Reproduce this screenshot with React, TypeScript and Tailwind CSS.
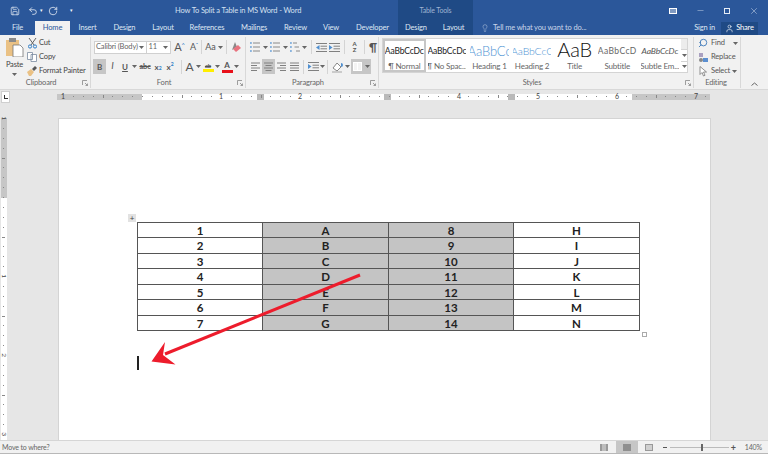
import type { ReactNode } from "react";
import { Save, Undo2, RotateCw, Lightbulb, User, Minus, X, Search } from "lucide-react";

const tabs = [
  { label: "File", w: "w-[35px]" },
  { label: "Home", w: "w-[35px]", active: true },
  { label: "Insert", w: "w-[35px]" },
  { label: "Design", w: "w-[39px]" },
  { label: "Layout", w: "w-[38px]" },
  { label: "References", w: "w-[50px]" },
  { label: "Mailings", w: "w-[44px]" },
  { label: "Review", w: "w-[39px]" },
  { label: "View", w: "w-[32px]" },
  { label: "Developer", w: "w-[51px]" },
];

const rows = [
  ["1", "A", "8", "H"],
  ["2", "B", "9", "I"],
  ["3", "C", "10", "J"],
  ["4", "D", "11", "K"],
  ["5", "E", "12", "L"],
  ["6", "F", "13", "M"],
  ["7", "G", "14", "N"],
];

const styles = [
  { sample: "AaBbCcDc", name: "¶ Normal", cls: "text-[8.5px] leading-[20px] text-[#222]", on: true },
  { sample: "AaBbCcDc", name: "¶ No Spac...", cls: "text-[8.5px] leading-[20px] text-[#222]" },
  { sample: "AaBbCc", name: "Heading 1", cls: "text-[13px] leading-[20px] font-light text-[#4f94d4]" },
  { sample: "AaBbCcC", name: "Heading 2", cls: "text-[10.5px] leading-[20px] font-light text-[#4f94d4]" },
  { sample: "AaB", name: "Title", cls: "text-[20px] leading-[17px] font-light text-[#111]" },
  { sample: "AaBbCcD", name: "Subtitle", cls: "text-[8.5px] leading-[20px] text-[#666] tracking-[0.4px]" },
  { sample: "AaBbCcDc", name: "Subtle Em...", cls: "text-[8.5px] leading-[20px] italic text-[#555]" },
];

const Caret = () => (
  <svg width="5" height="3" viewBox="0 0 5 3" className="shrink-0">
    <path d="M0 0h5L2.500 3z" fill="#666" />
  </svg>
);

const Launcher = () => (
  <svg width="6" height="6" viewBox="0 0 6 6" className="shrink-0">
    <path d="M.5 5V.5H5M3 3l2.500 2.500M5.500 3.500v2h-2" fill="none" stroke="#888" strokeWidth=".8" />
  </svg>
);

const Lines = ({ kind }: { kind: string }) => {
  const d: Record<string, string> = {
    left: "M2 3h9M2 5.500h6M2 8h9M2 10.500h6",
    center: "M2 3h9M3.500 5.500h6M2 8h9M3.500 10.500h6",
    right: "M2 3h9M5 5.500h6M2 8h9M5 10.500h6",
    justify: "M2 3h9M2 5.500h9M2 8h9M2 10.500h9",
  };
  return (
    <svg width="13" height="13" viewBox="0 0 13 13">
      <path d={d[kind]} stroke="#808080" strokeWidth="1" fill="none" />
    </svg>
  );
};

const ListIcon = ({ nested = false }: { nested?: boolean }) => (
  <svg width="10" height="10" viewBox="0 0 10 10">
    <path d="M0 1h1.800M0 5h1.800M0 9h1.800" stroke="#6aa0d8" strokeWidth="1.500" />
    <path d={nested ? "M3 1h4M4.500 5H9M6 9h4" : "M3 1h7M3 5h7M3 9h7"} stroke="#8a8a8a" strokeWidth="1" />
  </svg>
);

const IndentIcon = ({ flip = false }: { flip?: boolean }) => (
  <svg width="11" height="9" viewBox="0 0 11 9">
    <path d="M0 .5h11M4.500 3.200H11M4.500 5.800H11M0 8.500h11" stroke="#808080" strokeWidth="1" />
    <path d={flip ? "M3.500 4.500 0 2v5z" : "M0 4.500 3.500 2v5z"} fill="#4f8fd0" />
  </svg>
);

const Sep = () => <span className="block w-px h-[14px] bg-[#d4d4d4] shrink-0" />;

const Slot = ({ className = "", children }: { className?: string; children: ReactNode }) => (
  <span className={`flex items-center justify-center shrink-0 h-[15px] text-[#555] ${className}`}>{children}</span>
);

const Group = ({ width, label, launcher = true, children }: { width: string; label?: string; launcher?: boolean; children: ReactNode }) => (
  <div className={`${width} shrink-0 flex flex-col border-r border-[#d8d8d8] mt-[2px] mb-[1px]`}>
    <div className="flex-1 min-h-0">{children}</div>
    <div className="h-[10px] flex items-center justify-between pr-[2px] pb-[1px] text-[7.5px] text-[#666] leading-none">
      <span className="flex-1 text-center">{label}</span>
      {launcher && <Launcher />}
    </div>
  </div>
);

const ClipRow = ({ icon, label }: { icon: ReactNode; label: string }) => (
  <div className="flex items-center gap-[2px] h-[14px] text-[7.5px] text-[#444] whitespace-nowrap">
    <span className="w-[10px] flex justify-center">{icon}</span>
    {label}
  </div>
);

const Clipboard = () => (
  <div className="flex pl-[3px]">
    <div className="w-[23px] flex flex-col items-center text-[7.5px] text-[#444]">
      <svg width="18" height="20" viewBox="0 0 18 20">
        <rect x="0" y="3" width="13" height="16" fill="#eac184" />
        <rect x="3" y="1" width="7" height="4" fill="#8a8a8a" />
        <path d="M7 8h7l3 3v9H7z" fill="#fff" stroke="#777" strokeWidth=".8" />
      </svg>
      <span className="mt-[3px] leading-[10px]">Paste</span>
      <span className="mt-[3px]">
        <Caret />
      </span>
    </div>
    <div className="ml-[1px] -mt-[1px]">
      <ClipRow
        label="Cut"
        icon={
          <svg width="9" height="11" viewBox="0 0 9 11">
            <path d="M1 0l5 7M8 0L3 7" stroke="#666" strokeWidth="1" />
            <circle cx="2" cy="8.500" r="1.600" fill="none" stroke="#2f7dc6" />
            <circle cx="7" cy="8.500" r="1.600" fill="none" stroke="#2f7dc6" />
          </svg>
        }
      />
      <ClipRow
        label="Copy"
        icon={
          <svg width="10" height="10" viewBox="0 0 10 10">
            <path d="M.5.5h5v7h-5zM4 2.500h5.500v7H4z" fill="#fff" stroke="#7a8aa0" strokeWidth=".8" />
          </svg>
        }
      />
      <ClipRow
        label="Format Painter"
        icon={
          <svg width="10" height="10" viewBox="0 0 10 10">
            <path d="M0 6l4-3 3 3-3 4H2z" fill="#eac184" />
            <path d="M5 3l3-3 2 2-3 3z" fill="#555" />
          </svg>
        }
      />
    </div>
  </div>
);

const FontGroup = () => (
  <div className="pl-[3px] pt-[3px] flex flex-col gap-[5px]">
    <div className="flex items-center h-[14px]">
      <div className="w-[54px] h-[13px] bg-white border border-[#d0d0d0] flex items-center justify-between px-[1px] pr-[2px] text-[7.5px] text-[#666] whitespace-nowrap">
        Calibri (Body)
        <Caret />
      </div>
      <div className="w-[25px] h-[13px] bg-white border border-l-0 border-[#d0d0d0] flex items-center justify-between px-[2px] text-[7.5px] text-[#666]">
        11
        <Caret />
      </div>
      <Slot className="w-[15px] ml-[1px] text-[11px]">
        A<span className="text-[#2f7dc6] text-[6px] -mt-[6px]">^</span>
      </Slot>
      <Slot className="w-[14px] text-[9px]">
        A<span className="text-[#2f7dc6] text-[6px] -mt-[5px]">ˇ</span>
      </Slot>
      <Sep />
      <Slot className="w-[24px] text-[9px] gap-[2px]">
        Aa
        <Caret />
      </Slot>
      <Sep />
      <Slot className="w-[18px]">
        <svg width="10" height="11" viewBox="0 0 10 11">
          <path d="M1 8l3-8 2 5z" fill="#888" />
          <path d="M2 7l5-4 3 3-5 4z" fill="#e8737f" />
        </svg>
      </Slot>
    </div>
    <div className="flex items-center h-[15px] text-[8px] font-bold -ml-[1px]">
      <Slot className="w-[13px] bg-[#c6c6c6]">B</Slot>
      <Slot className="w-[13px] italic font-normal text-[9.5px]">I</Slot>
      <Slot className="w-[12px] underline">U</Slot>
      <Slot className="w-[7px]">
        <Caret />
      </Slot>
      <Slot className="w-[14px] line-through text-[7.5px]">abc</Slot>
      <Slot className="w-[12px]">
        x<span className="text-[#2f7dc6] text-[5px] mt-[5px]">2</span>
      </Slot>
      <Slot className="w-[12px]">
        x<span className="text-[#2f7dc6] text-[5px] -mt-[4px]">2</span>
      </Slot>
      <span className="ml-[5px] mr-[2px]">
        <Sep />
      </span>
      <Slot className="w-[11px] text-[#6d9bd4] text-[12px] font-normal">A</Slot>
      <Slot className="w-[7px]">
        <Caret />
      </Slot>
      <Slot className="w-[12px] flex-col">
        <span className="text-[6px] leading-[7px] line-through">ab</span>
        <span className="w-[11px] h-[3px] bg-[#ffee00]" />
      </Slot>
      <Slot className="w-[7px]">
        <Caret />
      </Slot>
      <Slot className="w-[12px] flex-col">
        <span className="text-[8px] leading-[9px]">A</span>
        <span className="w-[11px] h-[3px] bg-[#e8101a]" />
      </Slot>
      <Slot className="w-[6px]">
        <Caret />
      </Slot>
    </div>
  </div>
);

const ParagraphGroup = () => (
  <div className="pl-[3px] pt-[3px] flex flex-col gap-[5px]">
    <div className="flex items-center h-[14px]">
      <Slot className="w-[12px]"><ListIcon /></Slot>
      <Slot className="w-[8px]"><Caret /></Slot>
      <Slot className="w-[12px]"><ListIcon /></Slot>
      <Slot className="w-[8px]"><Caret /></Slot>
      <Slot className="w-[12px]"><ListIcon nested /></Slot>
      <Slot className="w-[6px]"><Caret /></Slot>
      <span className="ml-[4px] mr-[3px]"><Sep /></span>
      <Slot className="w-[13px]"><IndentIcon /></Slot>
      <Slot className="w-[13px]"><IndentIcon flip /></Slot>
      <span className="mx-[3px]"><Sep /></span>
      <Slot className="w-[13px] text-[6px] font-bold flex-col leading-[6px] text-[#4f8fd0]">
        <span>A</span>
        <span>Z</span>
      </Slot>
      <span className="ml-[3px] mr-[3px]"><Sep /></span>
      <Slot className="w-[10px] text-[11px] font-bold">¶</Slot>
    </div>
    <div className="flex items-center h-[15px]">
      <Slot className="w-[13px]"><Lines kind="left" /></Slot>
      <Slot className="w-[13px] bg-[#c6c6c6]"><Lines kind="center" /></Slot>
      <Slot className="w-[13px]"><Lines kind="right" /></Slot>
      <Slot className="w-[13px]"><Lines kind="justify" /></Slot>
      <span className="ml-[2px] mr-[4px]"><Sep /></span>
      <Slot className="w-[11px]"><IndentIcon flip /></Slot>
      <Slot className="w-[7px]"><Caret /></Slot>
      <span className="ml-[1px] mr-[4px]"><Sep /></span>
      <Slot className="w-[12px]">
        <svg width="12" height="12" viewBox="0 0 12 12">
          <path d="M1 7l4-5 4 4-4 4z" fill="#fff" stroke="#888" />
          <path d="M9 2a2 2 0 1 1 0 4z" fill="#4f8fd0" />
          <path d="M0 11h10" stroke="#bbb" strokeWidth="1.400" />
        </svg>
      </Slot>
      <Slot className="w-[7px]"><Caret /></Slot>
      <Slot className="w-[20px] bg-[#c6c6c6] gap-[3px]">
        <span className="w-[9px] h-[9px] bg-white grid grid-cols-2 gap-px border border-white">
          <span className="bg-[#f3f3f3]" />
          <span className="bg-[#f3f3f3]" />
        </span>
        <Caret />
      </Slot>
    </div>
  </div>
);

const StylesGroup = () => (
  <div className="pl-[3px] pt-[1px] flex">
    <div className="w-[300px] h-[35px] bg-white border border-[#d4d4d4] flex">
      {styles.map((s) => (
        <div
          key={s.name}
          className={`w-[42.6px] shrink-0 flex flex-col items-center overflow-hidden ${s.on ? "border-2 border-[#c6c6c6]" : "border-2 border-white"}`}
        >
          <span className={`h-[20px] whitespace-nowrap ${s.cls}`}>{s.sample}</span>
          <span className="mt-[1px] text-[8px] leading-[8px] text-[#666] whitespace-nowrap">{s.name}</span>
        </div>
      ))}
    </div>
    <div className="w-[7px] h-[35px] flex flex-col bg-white border border-l-0 border-[#d4d4d4] ml-[-1px]">
      <span className="flex-1 bg-[#ececec] border-b border-[#d4d4d4]" />
      <span className="flex-1 flex items-center justify-center border-b border-[#d4d4d4]"><Caret /></span>
      <span className="flex-1 flex items-center justify-center"><Caret /></span>
    </div>
  </div>
);

const EditRow = ({ icon, label, caret }: { icon: ReactNode; label: string; caret?: ReactNode }) => (
  <div className="flex items-center gap-[2px] h-[14px] text-[7.5px] text-[#555] whitespace-nowrap">
    <span className="w-[12px] flex justify-center">{icon}</span>
    {label}
    {caret}
  </div>
);

const Editing = () => (
  <div className="pl-[3px] -mt-[1px]">
    <EditRow label="Find" icon={<Search size={10} color="#2f6fb5" strokeWidth={2} className="-scale-x-100" />} caret={<span className="ml-[6px]"><Caret /></span>} />
    <EditRow
      label="Replace"
      icon={
        <svg width="11" height="11" viewBox="0 0 11 11">
          <path d="M1 1h4v4H1z" fill="#a9a0c0" />
          <path d="M5 6h5v4H5z" fill="#5b8fd0" />
          <circle cx="3" cy="8" r="2" fill="#888" />
        </svg>
      }
    />
    <EditRow
      label="Select"
      icon={
        <svg width="9" height="11" viewBox="0 0 9 11">
          <path d="M1 .5v8l2-2 1.500 3.500 1.500-.7L4.500 6H7.500z" fill="#fff" stroke="#777" strokeWidth=".8" />
        </svg>
      }
      caret={<Caret />}
    />
  </div>
);

const hTicks = Array.from({ length: 83 }, (_, i) => 63 + i * 9.875).filter((x) => x < 708);
const hNums = [
  { x: 63, n: 1 },
  { x: 221, n: 1 },
  { x: 300, n: 2 },
  { x: 459, n: 4 },
  { x: 538, n: 5 },
  { x: 617, n: 6 },
  { x: 696, n: 7 },
];

const HRuler = () => (
  <div className="h-[13px] shrink-0 flex items-center relative">
    <div className="ml-[1px] w-[9px] h-[12px] bg-white border border-[#cfcfcf] flex items-center justify-center">
      <span className="w-[4px] h-[4px] border-l border-b border-[#333]" />
    </div>
    <div className="ml-[47px] h-[6px] flex w-[653px]">
      <span className="w-[85px] bg-[#c6c6c6]" />
      <span className="w-[115px] bg-white" />
      <span className="w-[7px] bg-[#b9b9b9]" />
      <span className="w-[120px] bg-white" />
      <span className="w-[7px] bg-[#b9b9b9]" />
      <span className="w-[117px] bg-white" />
      <span className="w-[7px] bg-[#b9b9b9]" />
      <span className="w-[117px] bg-white" />
      <span className="flex-1 bg-[#c6c6c6]" />
    </div>
    {hTicks.map((x, i) =>
      hNums.some((h) => Math.abs(h.x - x) < 3) ? null : (
        <span
          key={i}
          className={`absolute w-px bg-[#888] ${i % 8 === 4 ? "h-[3px] top-[5px]" : "h-px top-[6px]"}`}
          style={{ left: x }}
        />
      )
    )}
    {hNums.map((h) => (
      <span key={h.x} className="absolute top-[2px] w-[8px] text-center text-[7px] leading-[9px] text-[#444]" style={{ left: h.x - 4 }}>
        {h.n}
      </span>
    ))}
  </div>
);

const vTicks = Array.from({ length: 42 }, (_, i) => 15 + i * 9.875);
const vNums: Record<number, number> = { 0: 1, 16: 1, 24: 2, 32: 3 };

const VRuler = () => (
  <div className="ml-[1px] w-[6px] shrink-0 relative">
    <div className="mt-[15px] h-[80px] bg-[#c6c6c6]" />
    <div className="h-[242px] bg-white" />
    {vTicks.map((y, i) =>
      vNums[i] ? (
        <span key={i} className="absolute left-0 w-[6px] h-[6px] rotate-90 text-center text-[6.5px] leading-[6px] text-[#444]" style={{ top: y - 3 }}>
          {vNums[i]}
        </span>
      ) : (
        <span key={i} className={`absolute h-px bg-[#888] ${i % 8 === 4 ? "left-[1px] w-[3px]" : "left-[2px] w-px"}`} style={{ top: y }} />
      )
    )}
  </div>
);

const Table = () => (
  <div className="relative w-[503px] tracking-normal">
    <span className="absolute left-[-9px] top-[-8px] w-[8px] h-[8px] bg-[#e2e2e2] flex items-center justify-center text-[8px] leading-none text-[#444]">+</span>
    <div className="grid grid-cols-[125px_126px_125px_1fr] grid-rows-7 h-[109px] border-l border-t border-[#555]">
      {rows.flat().map((c, i) => (
        <div
          key={i}
          className={`flex items-center justify-center pt-[1px] border-r border-b border-[#555] text-[11.5px] font-bold text-[#222] leading-none ${i % 4 === 1 || i % 4 === 2 ? "bg-[#c4c4c4]" : ""}`}
        >
          {c}
        </div>
      ))}
    </div>
    <span className="absolute right-[-7px] bottom-[-6px] w-[5px] h-[5px] bg-white border border-[#aaa]" />
  </div>
);

const Arrow = () => (
  <svg className="absolute left-0 top-0 pointer-events-none" width="768" height="454" viewBox="0 0 768 454">
    <path d="M360 275 165 354" stroke="#ed1c2c" strokeWidth="3" fill="none" />
    <path d="M151.500 361.500 165 342 163 355 175.500 364.500z" fill="#ed1c2c" />
  </svg>
);

export default function App() {
  return (
    <div className="relative w-[768px] h-[454px] overflow-hidden flex flex-col bg-[#e6e6e6] tracking-[-0.15px] font-['Lato','Open_Sans',sans-serif]">
      <header className="h-[35px] shrink-0 bg-[#2b579a] flex text-white">
        <div className="w-[398px] flex flex-col">
          <div className="h-[21px] flex items-center relative">
            <div className="flex items-center text-[#f3f6fb] pl-[10px]">
              <Save size={10} strokeWidth={1.6} />
              <Undo2 size={10} strokeWidth={1.8} className="ml-[8px]" />
              <span className="ml-[2px] text-[5px]">▾</span>
              <RotateCw size={10} strokeWidth={1.8} className="ml-[5px]" />
              <span className="ml-[12px] text-[5px]">▾</span>
            </div>
            <span className="absolute left-[175px] text-[7.5px] text-[#d5e0f0] whitespace-nowrap">How To Split a Table in MS Word - Word</span>
          </div>
          <nav className="h-[14px] flex items-end">
            {tabs.map((t) => (
              <span
                key={t.label}
                className={`${t.w} h-[14px] flex items-center justify-center text-[7.5px] ${t.active ? "bg-[#f1f1f1] text-[#2b579a]" : "text-[#dfe7f3]"}`}
              >
                {t.label}
              </span>
            ))}
          </nav>
        </div>
        <div className="w-[75px] bg-[#1f4a85] flex flex-col text-[#dfe7f3]">
          <div className="h-[21px] flex items-center justify-center text-[7px] text-[#9fb4d2]">Table Tools</div>
          <div className="h-[14px] flex text-[7.5px]">
            <span className="w-[36px] flex items-center justify-center">Design</span>
            <span className="w-[39px] flex items-center justify-center">Layout</span>
          </div>
        </div>
        <div className="flex-1 flex flex-col">
          <div className="h-[21px] flex items-center justify-end text-[#d5e0f0]">
            <span className="w-[8px] h-[6px] border border-white bg-white/40 mr-[19px]" />
            <Minus size={9} strokeWidth={1.2} className="mr-[19px]" />
            <span className="w-[6px] h-[6px] border border-[#e5ecf6] mr-[19px]" />
            <X size={10} strokeWidth={1.2} className="mr-[9px]" />
          </div>
          <div className="h-[14px] flex items-center text-[7.5px] text-[#c9d6e9] pr-[10px]">
            <Lightbulb size={8} strokeWidth={1.4} className="ml-[8px]" />
            <span className="ml-[4px] whitespace-nowrap">Tell me what you want to do...</span>
            <span className="ml-auto whitespace-nowrap text-[#dfe7f3]">Sign in</span>
            <span className="ml-[6px] w-[37px] h-[13px] bg-[#1f4a85] flex items-center justify-center gap-[2px] text-white">
              <User size={9} strokeWidth={1.6} />
              Share
            </span>
          </div>
        </div>
      </header>

      <section className="h-[55px] shrink-0 bg-[#f1f1f1] border-b border-[#d8d8d8] flex">
        <Group width="w-[91px]" label="Clipboard">
          <Clipboard />
        </Group>
        <Group width="w-[155px]" label="Font">
          <FontGroup />
        </Group>
        <Group width="w-[133px]" label="Paragraph">
          <ParagraphGroup />
        </Group>
        <Group width="w-[315px]" label="Styles">
          <StylesGroup />
        </Group>
        <Group width="w-[47px]" label="Editing" launcher={false}>
          <Editing />
        </Group>
        <div className="flex-1 flex items-end justify-center pb-[3px]">
          <svg width="7" height="4" viewBox="0 0 7 4">
            <path d="M.5 3.500l3-2.500 3 2.500" stroke="#666" fill="none" />
          </svg>
        </div>
      </section>

      <HRuler />

      <main className="flex-1 min-h-0 flex overflow-hidden">
        <VRuler />
        <div className="ml-[51px] mt-[15px] w-[653px] bg-white border border-[#d4d4d4] border-b-0 pl-[78px] pt-[103px]">
          <Table />
          <div className="mt-[25px] w-[2px] h-[14px] bg-[#222]" />
        </div>
      </main>

      <footer className="h-[14px] shrink-0 bg-[#f1f1f1] border-t border-[#d6d6d6] border-b-[#b8b8b8] border-b flex items-center text-[7px] text-[#666]">
        <span className="ml-[2px]">Move to where?</span>
        <div className="ml-auto flex items-center h-full">
          <span className="w-[8px] h-[7px] bg-[#bdbdbd] border-x-2 border-[#999]" />
          <span className="ml-[8px] w-[22px] h-full bg-[#c6c6c6] flex items-center justify-center">
            <span className="w-[8px] h-[7px] bg-[#8f8f8f]" />
          </span>
          <span className="ml-[7px] w-[8px] h-[7px] bg-[#d0d0d0] border border-[#999]" />
          <span className="ml-[10px] w-[4px] h-px bg-[#555]" />
          <div className="ml-[3px] w-[59px] h-px bg-[#bbb] flex justify-start">
            <span className="ml-[31px] mt-[-3px] w-[2px] h-[7px] bg-[#666]" />
          </div>
          <span className="ml-[2px] font-bold text-[#555] text-[9px] leading-none">+</span>
          <span className="ml-[9px] mr-[6px]">140%</span>
        </div>
      </footer>

      <Arrow />
    </div>
  );
}
